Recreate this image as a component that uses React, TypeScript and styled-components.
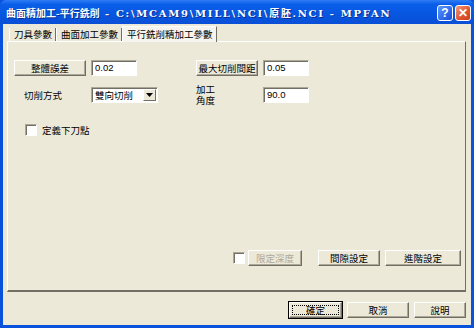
import React from "react";
import styled, { createGlobalStyle, css } from "styled-components";

const GlobalStyle = createGlobalStyle`
  html, body {
    margin: 0;
    padding: 0;
    background: #ffffff;
  }
  body {
    font-family: "Liberation Sans", "Noto Sans CJK TC", sans-serif;
    font-size: 10px;
  }
`;

const FONT = `"Liberation Sans", "Noto Sans CJK TC", sans-serif`;

const Window = styled.div`
  width: 474px;
  height: 328px;
  display: flex;
  flex-direction: column;
  box-sizing: border-box;
  background: #0a52dc;
  padding: 0 3px 3px 3px;
  overflow: hidden;
`;

const TitleBar = styled.div`
  height: 24px;
  margin: 0 -3px;
  padding: 1px 3px 0 6px;
  box-sizing: border-box;
  display: flex;
  align-items: center;
  background: linear-gradient(
    #2f7df5 0%,
    #0a5ee8 18%,
    #0856e0 60%,
    #0a4fd6 100%
  );
  border-radius: 6px 6px 0 0;
`;

const Title = styled.div`
  flex: 1;
  color: #ffffff;
  font-family: "Noto Sans CJK TC", sans-serif;
  font-weight: bold;
  font-size: 10px;
  white-space: nowrap;
  text-shadow: 1px 1px 0 #0a2a8c;
`;

const TitlePath = styled.span`
  font-family: "DejaVu Serif", "Noto Sans CJK TC", serif;
  font-size: 10px;
  letter-spacing: 1.7px;
`;

const CaptionButton = styled.div<{ $kind: "help" | "close" }>`
  width: 16px;
  height: 16px;
  margin-left: 2px;
  border: 1px solid #ffffff;
  border-radius: 3px;
  box-sizing: border-box;
  display: flex;
  align-items: center;
  justify-content: center;
  color: #ffffff;
  font-family: ${FONT};
  font-weight: bold;
  font-size: 12px;
  ${(p) =>
    p.$kind === "help"
      ? css`
          background: linear-gradient(135deg, #5b9bff, #2a62e6 70%, #1d4fd0);
        `
      : css`
          background: linear-gradient(135deg, #f39a7a, #e0522e 60%, #c8401c);
        `}
`;

const Body = styled.div`
  flex: 1;
  background: #ece9d8;
  display: flex;
  flex-direction: column;
  padding: 2px 5px 0 4px;
  font-family: ${FONT};
  font-size: 9.5px;
  color: #000000;
`;

const TabStrip = styled.div`
  display: flex;
  align-items: flex-end;
  height: 15px;
  padding-left: 2px;
`;

const Tab = styled.div<{ $active?: boolean }>`
  height: ${(p) => (p.$active ? 15 : 13)}px;
  line-height: ${(p) => (p.$active ? 15 : 13)}px;
  padding: 0 3px 0 4px;
  border-right: 1px solid #716f64;
  border-left: 1px solid #ffffff;
  white-space: nowrap;
  background: ${(p) => (p.$active ? "#f5f4ee" : "transparent")};
  ${(p) =>
    p.$active &&
    css`
      border-top: 1px solid #ffffff;
      margin-bottom: -1px;
      position: relative;
      z-index: 1;
    `}
`;

const TabPanel = styled.div`
  flex: 1;
  border-top: 1px solid #ffffff;
  border-left: 1px solid #ffffff;
  border-right: 1px solid #716f64;
  border-bottom: 2px solid #716f64;
  display: flex;
  flex-direction: column;
  padding: 18px 4px 24px 6px;
`;

const FieldGrid = styled.div`
  display: grid;
  grid-template-columns: 77px 105px 67px 46px;
  row-gap: 8px;
  align-items: center;
`;

const Button = styled.div<{ $w: number; $disabled?: boolean; $default?: boolean }>`
  width: ${(p) => p.$w}px;
  height: 16px;
  box-sizing: border-box;
  display: flex;
  align-items: center;
  justify-content: center;
  white-space: nowrap;
  background: #ece9d8;
  border-top: 1px solid #ffffff;
  border-left: 1px solid #ffffff;
  border-right: 1px solid #716f64;
  border-bottom: 1px solid #716f64;
  box-shadow: inset -1px -1px 0 #aca899;
  color: ${(p) => (p.$disabled ? "#aca899" : "#000000")};
  ${(p) =>
    p.$default &&
    css`
      outline: 1px solid #000000;
      position: relative;
      &::after {
        content: "";
        position: absolute;
        inset: 2px;
        border: 1px dotted #000000;
      }
    `}
`;

const Input = styled.div<{ $w: number }>`
  width: ${(p) => p.$w}px;
  height: 16px;
  box-sizing: border-box;
  background: #ffffff;
  border-top: 1px solid #aca899;
  border-left: 1px solid #aca899;
  border-right: 1px solid #ffffff;
  border-bottom: 1px solid #ffffff;
  box-shadow: inset 1px 1px 0 #716f64;
  padding: 0 3px;
  line-height: 14px;
`;

const Select = styled.div`
  width: 67px;
  height: 16px;
  box-sizing: border-box;
  background: #ffffff;
  border-top: 1px solid #aca899;
  border-left: 1px solid #aca899;
  border-right: 1px solid #ffffff;
  border-bottom: 1px solid #ffffff;
  box-shadow: inset 1px 1px 0 #716f64;
  display: flex;
  align-items: center;
  padding-left: 3px;
  white-space: nowrap;
`;

const SelectValue = styled.span`
  flex: 1;
`;

const DropArrow = styled.div`
  width: 13px;
  height: 12px;
  margin-right: 1px;
  background: #ece9d8;
  border-top: 1px solid #ffffff;
  border-left: 1px solid #ffffff;
  border-right: 1px solid #716f64;
  border-bottom: 1px solid #716f64;
  box-sizing: border-box;
  display: flex;
  align-items: center;
  justify-content: center;
`;

const Label = styled.div<{ $indent?: number }>`
  padding-left: ${(p) => p.$indent ?? 0}px;
  white-space: nowrap;
`;

const StackLabel = styled.div`
  line-height: 11px;
`;

const CheckRow = styled.div<{ $top?: number; $indent?: number }>`
  display: flex;
  align-items: center;
  gap: 5px;
  margin-top: ${(p) => p.$top ?? 0}px;
  padding-left: ${(p) => p.$indent ?? 0}px;
`;

const CheckBox = styled.div`
  width: 10px;
  height: 10px;
  background: #ffffff;
  border-top: 1px solid #aca899;
  border-left: 1px solid #aca899;
  border-right: 1px solid #ffffff;
  border-bottom: 1px solid #ffffff;
  box-shadow: inset 1px 1px 0 #716f64;
`;

const PanelFooter = styled.div`
  margin-top: auto;
  display: flex;
  justify-content: flex-end;
  align-items: center;
`;

const Spacer = styled.div<{ $w: number }>`
  width: ${(p) => p.$w}px;
  flex: none;
`;

const DialogFooter = styled.div`
  height: 33px;
  box-sizing: border-box;
  padding-top: 10px;
  display: flex;
  justify-content: flex-end;
  align-items: flex-start;
  gap: 5px;
`;

function ArrowDown() {
  return (
    <svg width="7" height="4" viewBox="0 0 7 4">
      <path d="M0 0h7L3.5 4z" fill="#000" />
    </svg>
  );
}

export default function App() {
  return (
    <>
      <GlobalStyle />
      <Window>
        <TitleBar>
          <Title>
            曲面精加工-平行銑削<TitlePath> - C:\MCAM9\MILL\NCI\原胚.NCI - MPFAN</TitlePath>
          </Title>
          <CaptionButton $kind="help">?</CaptionButton>
          <CaptionButton $kind="close">✕</CaptionButton>
        </TitleBar>
        <Body>
          <TabStrip>
            <Tab>刀具參數</Tab>
            <Tab>曲面加工參數</Tab>
            <Tab $active>平行銑削精加工參數</Tab>
          </TabStrip>
          <TabPanel>
            <FieldGrid>
              <Button $w={72}>整體誤差</Button>
              <Input $w={46}>0.02</Input>
              <Button $w={62}>最大切削間距</Button>
              <Input $w={46}>0.05</Input>

              <Label $indent={10}>切削方式</Label>
              <Select>
                <SelectValue>雙向切削</SelectValue>
                <DropArrow>
                  <ArrowDown />
                </DropArrow>
              </Select>
              <StackLabel>
                加工
                <br />
                角度
              </StackLabel>
              <Input $w={46}>90.0</Input>
            </FieldGrid>

            <CheckRow $top={17} $indent={11}>
              <CheckBox />
              <span>定義下刀點</span>
            </CheckRow>

            <PanelFooter>
              <CheckBox />
              <Spacer $w={3} />
              <Button $w={54} $disabled>
                限定深度
              </Button>
              <Spacer $w={16} />
              <Button $w={62}>間隙設定</Button>
              <Spacer $w={5} />
              <Button $w={76}>進階設定</Button>
            </PanelFooter>
          </TabPanel>
          <DialogFooter>
            <Button $w={53} $default>
              確定
            </Button>
            <Button $w={62}>取消</Button>
            <Button $w={52}>說明</Button>
          </DialogFooter>
        </Body>
      </Window>
    </>
  );
}
